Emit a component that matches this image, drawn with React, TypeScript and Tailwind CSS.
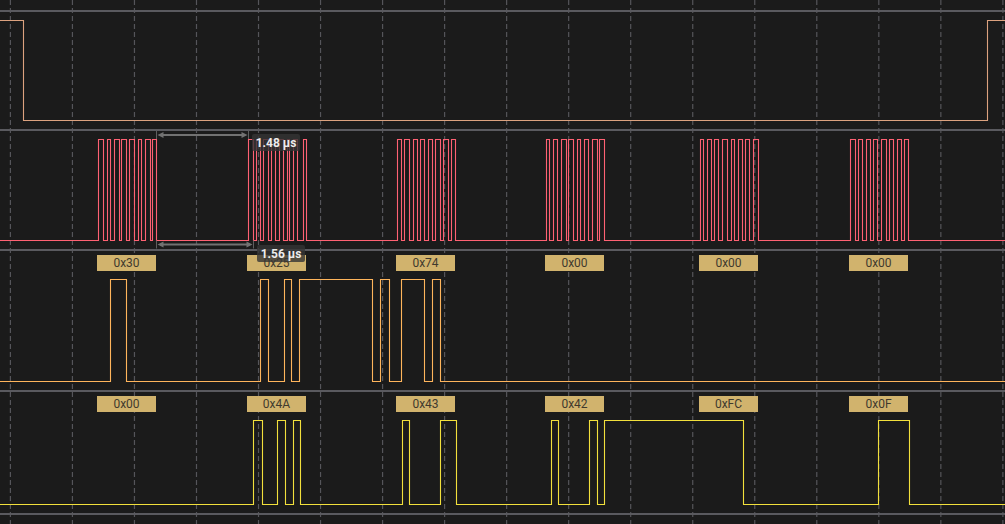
import React from "react";

const font = "font-['Roboto','Liberation_Sans',sans-serif]";

// pulse edges in px, rise/fall pairs
const traces = {
  enable: [[-20, 23], [987, 1040]],
  clock: [
    [98, 103], [107, 110], [114, 119], [121, 126], [129, 134], [138, 141], [145, 150], [152, 156],
    [248, 253], [256, 260], [263, 268], [271, 275], [279, 283], [287, 289], [293, 297], [303, 306],
    [397, 401], [404, 409], [413, 417], [420, 424], [428, 432], [435, 440], [443, 448], [451, 455],
    [546, 549], [553, 557], [561, 566], [568, 573], [577, 580], [584, 588], [592, 597], [599, 604],
    [700, 703], [707, 711], [714, 718], [722, 727], [731, 734], [738, 742], [745, 749], [753, 758],
    [850, 855], [858, 862], [866, 870], [873, 877], [881, 886], [889, 893], [897, 901], [904, 908],
  ],
  mosi: [[110, 126], [260, 268], [284, 291], [299, 372], [380, 389], [401, 424], [432, 440]],
  miso: [
    [253, 262], [277, 285], [293, 300], [402, 409], [440, 456], [551, 558], [589, 597], [604, 743], [878, 909],
  ],
};

const mosiBytes = [
  { x: 97, text: "0x30" },
  { x: 247, text: "0x25" },
  { x: 396, text: "0x74" },
  { x: 545, text: "0x00" },
  { x: 699, text: "0x00" },
  { x: 849, text: "0x00" },
];

const misoBytes = [
  { x: 97, text: "0x00" },
  { x: 247, text: "0x4A" },
  { x: 396, text: "0x43" },
  { x: 545, text: "0x42" },
  { x: 699, text: "0xFC" },
  { x: 849, text: "0x0F" },
];

function wavePath(pulses: number[][], high: number, low: number) {
  let d = `M-20 ${low}`;
  pulses.forEach(([a, b]) => {
    d += ` H${a + 0.5} V${high} H${b + 0.5} V${low}`;
  });
  return d + " H1025";
}

function Wave({ pulses, high, low, color }: { pulses: number[][]; high: number; low: number; color: string }) {
  return (
    <svg className="absolute left-0 top-0 h-full w-full" fill="none">
      <path d={wavePath(pulses, high, low)} stroke={color} strokeWidth="1.1" />
    </svg>
  );
}

function ByteLabels({ items }: { items: { x: number; text: string }[] }) {
  return (
    <>
      {items.map((b, i) => (
        <div
          key={i}
          className="absolute top-[4px] flex h-[16px] w-[59px] items-center justify-center bg-[#d1b36d] text-[12px] text-[#3f3a2e]"
          style={{ left: b.x }}
        >
          {b.text}
        </div>
      ))}
    </>
  );
}

function Span({ x1, x2, y }: { x1: number; x2: number; y: number }) {
  return (
    <g>
      <path d={`M${x1} ${y - 4} V${y + 4} M${x2} ${y - 4} V${y + 4}`} stroke="#5e5e5e" strokeWidth="1" />
      <path d={`M${x1 + 4} ${y} H${x2 - 4}`} stroke="#727272" strokeWidth="1.8" />
      <path d={`M${x1 + 1} ${y} l6 -3 v6 z M${x2 - 1} ${y} l-6 -3 v6 z`} fill="#727272" />
    </g>
  );
}

function Measure({ text, className }: { text: string; className: string }) {
  return (
    <div
      className={`absolute flex h-[17px] w-[48px] items-center justify-center rounded-[2px] bg-[#343434]/80 text-[12px] font-bold text-[#ececec] ${className}`}
    >
      {text}
    </div>
  );
}

export default function App() {
  const gridXs = Array.from({ length: 17 }, (_, i) => 10.4 + i * 62.03);

  return (
    <div className={`relative h-[524px] w-[1005px] overflow-hidden bg-[#1b1b1b] pt-[10px] ${font}`}>
      {/* time grid */}
      <svg className="absolute left-0 top-0 h-full w-full">
        {gridXs.map((x) => (
          <line key={x} x1={x} x2={x} y1="0" y2="524" stroke="#55555a" strokeWidth="1.2" strokeDasharray="5 3" />
        ))}
      </svg>

      {/* channels */}
      <div className="relative h-[119px] border-t-2 border-[#5a5a5f]">
        <Wave pulses={traces.enable} high={8.5} low={108.5} color="#dca27f" />
      </div>
      <div className="relative h-[120px] border-t-2 border-[#5a5a5f]">
        <Wave pulses={traces.clock} high={8.5} low={109.5} color="#ff6173" />
      </div>
      <div className="relative h-[141px] border-t-2 border-[#5a5a5f]">
        <Wave pulses={traces.mosi} high={28.5} low={130.5} color="#ffb55c" />
        <ByteLabels items={mosiBytes} />
      </div>
      <div className="relative h-[125px] border-y-2 border-[#5a5a5f]">
        <Wave pulses={traces.miso} high={28.5} low={112.5} color="#f2e03c" />
        <ByteLabels items={misoBytes} />
      </div>

      {/* timing measurements */}
      <svg className="absolute left-0 top-0 h-full w-full">
        <Span x1={156.5} x2={248.5} y={135} />
        <Span x1={156.5} x2={253.5} y={244.5} />
      </svg>
      <Measure text="1.48 µs" className="left-[252px] top-[134px]" />
      <Measure text="1.56 µs" className="left-[257px] top-[245px]" />
    </div>
  );
}
